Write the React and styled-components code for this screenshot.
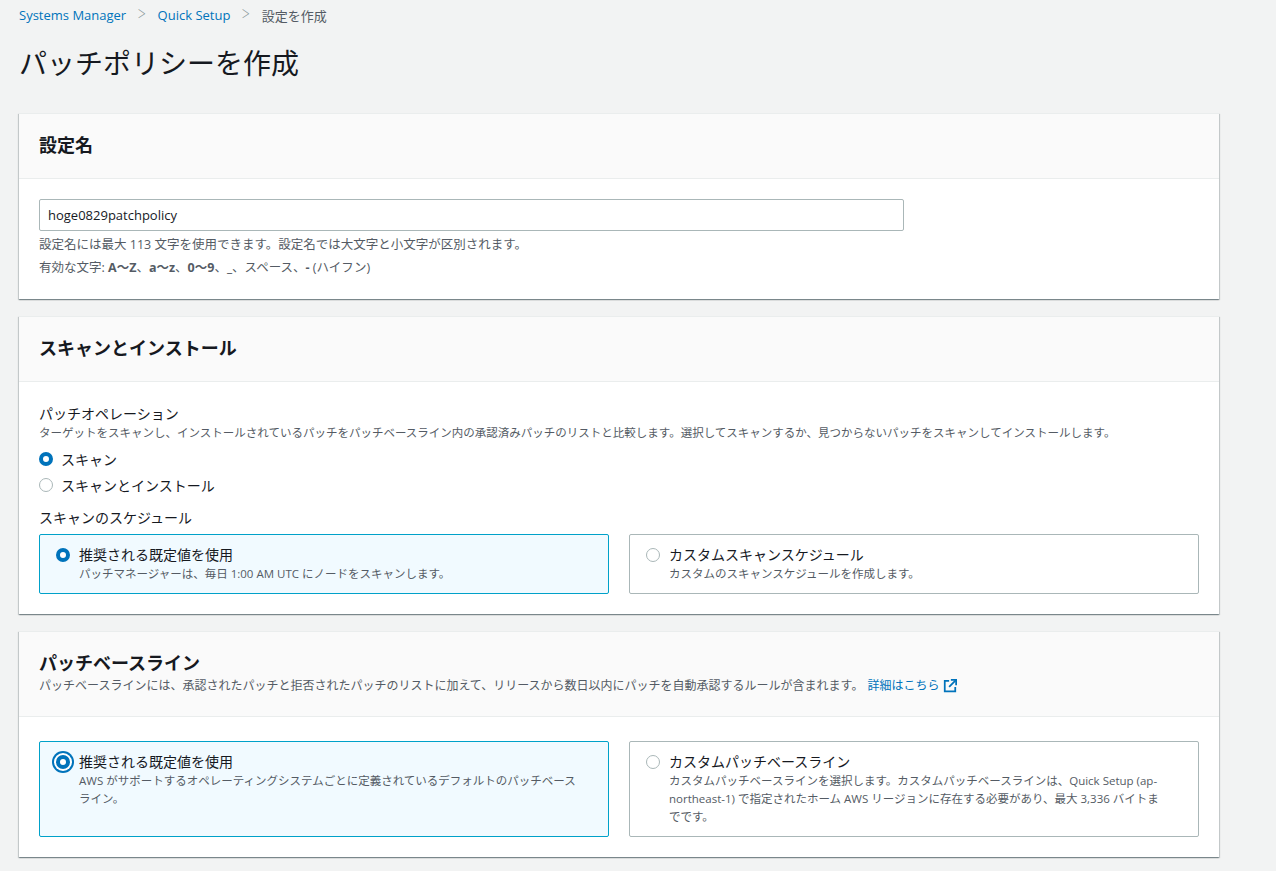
import React from "react";
import styled, { createGlobalStyle } from "styled-components";

const Global = createGlobalStyle`
  body { margin: 0; background: #f2f3f3; font-family: "Open Sans", "Noto Sans CJK JP", sans-serif; color: #16191f; }
`;
const Page = styled.div`padding: 0 57px 0 19px; display: flex; flex-direction: column;`;
const Crumbs = styled.nav`display: flex; align-items: center; gap: 10px; height: 30px; font-size: 13px;`;
const Crumb = styled.span`color: ${p => (p.$cur ? "#545b64" : "#0073bb")};`;
const Sep = styled.span`color: #879596; font-size: 20px; font-weight: 300; line-height: 20px; transform: scaleX(0.7); margin-top: -2px;`;
const Title = styled.h1`margin: 13px 0 30px; font-size: 28px; font-weight: 400; line-height: 40px;`;
const Card = styled.section`background: #fff; box-shadow: 0 1px 1px 0 rgba(0,28,36,.3), 1px 1px 1px 0 rgba(0,28,36,.15), -1px 1px 1px 0 rgba(0,28,36,.15); margin-bottom: 17px; border-top: 1px solid #eaeded;`;
const Header = styled.header`background: #fafafa; border-bottom: 1px solid #eaeded; padding: ${p => (p.$desc ? "19px 20px 21px" : "19px 20px 21px")};`;
const H2 = styled.h2`margin: 0; font-size: 18px; font-weight: 700; line-height: 24px;`;
const HDesc = styled.div`font-size: 12px; color: #545b64; line-height: 18px; margin-top: 2px; display: flex; align-items: center;`;
const Link = styled.a`color: #0073bb; text-decoration: none; margin-left: 4px; display: inline-flex; align-items: center; gap: 4px;`;
const Body = styled.div`padding: 20px 20px 20px; display: flex; flex-direction: column;`;
const Input = styled.div`width: 847px; height: 30px; border: 1px solid #aab7b8; border-radius: 2px; padding: 0 8px; display: flex; align-items: center; font-size: 13px;`;
const Hint = styled.div`font-size: 12.5px; color: #545b64; line-height: 23px; b { color: #545b64; font-weight: 700; }`;
const Label = styled.div`font-size: 14px; line-height: 20px; margin-top: ${p => p.$mt || 0}px;`;
const Desc = styled.div`font-size: 11.5px; color: #545b64; line-height: 18px;`;
const RadioRow = styled.label`display: flex; align-items: center; gap: 8px; font-size: 14px; height: 26px;`;
const Dot = styled.span`width: 14px; height: 14px; border-radius: 50%; box-sizing: border-box; flex: none; display: block;
  border: ${p => (p.$on ? "4px solid #0073bb" : "1px solid #aab7b8")}; background: #fff;
  ${p => p.$ring && "box-shadow: 0 0 0 2px #fff, 0 0 0 4px #0073bb;"}`;
const Tiles = styled.div`display: grid; grid-template-columns: 1fr 1fr; gap: 20px; margin-top: ${p => p.$mt || 0}px;`;
const Tile = styled.div`border: 1px solid ${p => (p.$on ? "#00a1c9" : "#aab7b8")}; background: ${p => (p.$on ? "#f1faff" : "#fff")};
  border-radius: 2px; padding: 10px 16px 10px 16px; display: flex; gap: 9px; min-height: ${p => p.$h}px; box-sizing: border-box;`;
const TileText = styled.div`display: flex; flex-direction: column; padding-right: 16px;`;
const TileTitle = styled.div`font-size: 14px; line-height: 20px;`;
const DotWrap = styled.div`padding-top: 3px; flex: none;`;

const Radio = ({ on, children }) => (<RadioRow><Dot $on={on} />{children}</RadioRow>);
const TileR = ({ on, ring, title, desc, h }) => (
  <Tile $on={on} $h={h}>
    <DotWrap><Dot $on={on} $ring={ring} /></DotWrap>
    <TileText><TileTitle>{title}</TileTitle><Desc>{desc}</Desc></TileText>
  </Tile>
);

export default function App() {
  return (
    <Page>
      <Global />
      <Crumbs>
        <Crumb>Systems Manager</Crumb><Sep>&gt;</Sep><Crumb>Quick Setup</Crumb><Sep>&gt;</Sep><Crumb $cur>設定を作成</Crumb>
      </Crumbs>
      <Title>パッチポリシーを作成</Title>
      <Card>
        <Header><H2>設定名</H2></Header>
        <Body>
          <Input>hoge0829patchpolicy</Input>
          <Hint style={{ marginTop: 2 }}>設定名には最大 113 文字を使用できます。設定名では大文字と小文字が区別されます。</Hint>
          <Hint>有効な文字: <b>A〜Z</b>、<b>a〜z</b>、<b>0〜9</b>、<b>_</b>、スペース、<b>-</b> (ハイフン)</Hint>
        </Body>
      </Card>
      <Card>
        <Header><H2>スキャンとインストール</H2></Header>
        <Body>
          <Label $mt={2}>パッチオペレーション</Label>
          <Desc>ターゲットをスキャンし、インストールされているパッチをパッチベースライン内の承認済みパッチのリストと比較します。選択してスキャンするか、見つからないパッチをスキャンしてインストールします。</Desc>
          <div style={{ marginTop: 4 }}>
            <Radio on>スキャン</Radio>
            <Radio>スキャンとインストール</Radio>
          </div>
          <Label $mt={10}>スキャンのスケジュール</Label>
          <Tiles $mt={6}>
            <TileR on h={60} title="推奨される既定値を使用" desc="パッチマネージャーは、毎日 1:00 AM UTC にノードをスキャンします。" />
            <TileR h={60} title="カスタムスキャンスケジュール" desc="カスタムのスキャンスケジュールを作成します。" />
          </Tiles>
        </Body>
      </Card>
      <Card>
        <Header $desc>
          <H2>パッチベースライン</H2>
          <HDesc>パッチベースラインには、承認されたパッチと拒否されたパッチのリストに加えて、リリースから数日以内にパッチを自動承認するルールが含まれます。
            <Link>詳細はこちら
              <svg width="14" height="14" viewBox="0 0 16 16" fill="none" stroke="#0073bb" strokeWidth="2"><path d="M7 2H2v12h12V9" /><path d="M9 1h6v6" /><path d="M15 1 7 9" /></svg>
            </Link>
          </HDesc>
        </Header>
        <Body style={{ paddingTop: 24 }}>
          <Tiles>
            <TileR on ring h={92} title="推奨される既定値を使用" desc="AWS がサポートするオペレーティングシステムごとに定義されているデフォルトのパッチベースライン。" />
            <TileR h={92} title="カスタムパッチベースライン" desc="カスタムパッチベースラインを選択します。カスタムパッチベースラインは、Quick Setup (ap-northeast-1) で指定されたホーム AWS リージョンに存在する必要があり、最大 3,336 バイトまでです。" />
          </Tiles>
        </Body>
      </Card>
      <Card style={{ height: 40 }} />
    </Page>
  );
}
